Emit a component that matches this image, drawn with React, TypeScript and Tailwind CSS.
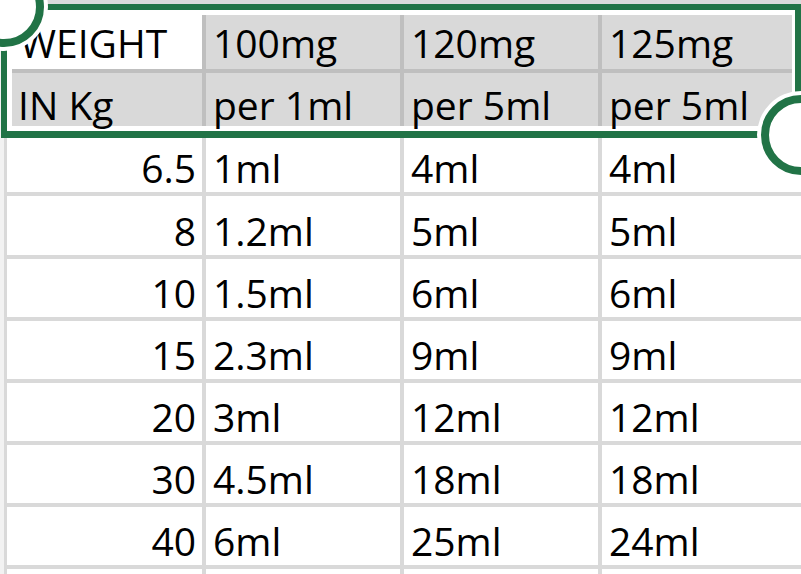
import React from "react";

const body: [string, string, string, string][] = [
  ["6.5", "1ml", "4ml", "4ml"],
  ["8", "1.2ml", "5ml", "5ml"],
  ["10", "1.5ml", "6ml", "6ml"],
  ["15", "2.3ml", "9ml", "9ml"],
  ["20", "3ml", "12ml", "12ml"],
  ["30", "4.5ml", "18ml", "18ml"],
  ["40", "6ml", "25ml", "24ml"],
  ["", "", "", ""],
];

function Handle({ cx, cy }: { cx: number; cy: number }) {
  return (
    <g>
      <circle cx={cx} cy={cy} r={44} fill="#ffffff" />
      <circle cx={cx} cy={cy} r={36} fill="#ffffff" stroke="#217346" strokeWidth={8} />
    </g>
  );
}

export default function App() {
  return (
    <div className="relative w-[801px] h-[574px] overflow-hidden bg-white font-['Open_Sans',sans-serif] text-[39px] leading-none text-black">
      {/* top strip */}
      <div className="h-[4px] bg-[#dadada]" />
      {/* header selection */}
      <div className="flex">
        <div className="w-[1px] bg-[#f2f2f2]" />
        <div className="w-[800px] border-[#217346] border-t-[6px] border-l-[6px] border-r-[6px] border-b-[7px] pt-[5px] pl-[5px] pr-[3px] pb-[5px] bg-white">
          <div className="grid grid-cols-[190px_194px_194px_190px] grid-rows-[54px_53px] gap-[4px] bg-[#bfbfbf]">
            <div className="bg-white flex items-end pl-[8px] pb-[7px]">WEIGHT</div>
            <div className="bg-[#d9d9d9] flex items-end pl-[7px] pb-[7px]">100mg</div>
            <div className="bg-[#d9d9d9] flex items-end pl-[7px] pb-[7px]">120mg</div>
            <div className="bg-[#d9d9d9] flex items-end pl-[7px] pb-[7px]">125mg</div>
            <div className="bg-[#d9d9d9] flex items-end pl-[6px] pb-[2px]">IN Kg</div>
            <div className="bg-[#d9d9d9] flex items-end pl-[7px] pb-[2px]">per 1ml</div>
            <div className="bg-[#d9d9d9] flex items-end pl-[7px] pb-[2px]">per 5ml</div>
            <div className="bg-[#d9d9d9] flex items-end pl-[7px] pb-[2px]">per 5ml</div>
          </div>
        </div>
      </div>
      {/* body */}
      <div className="flex h-[436px]">
        <div className="w-[4px] bg-[#f2f2f2]" />
        <div className="w-[3px] bg-[#d9d9d9]" />
        <div className="grid grid-cols-[195px_194px_194px_199px] grid-rows-[54px_59px_58px_58px_58px_58px_58px_58px] gap-[4px] bg-[#d9d9d9] w-[794px]">
          {body.map((r, i) => (
            <React.Fragment key={i}>
              <div className="bg-white flex items-end justify-end pr-[6px] pb-[5px]">{r[0]}</div>
              <div className="bg-white flex items-end pl-[7px] pb-[5px]">{r[1]}</div>
              <div className="bg-white flex items-end pl-[7px] pb-[5px]">{r[2]}</div>
              <div className="bg-white flex items-end pl-[7px] pb-[5px]">{r[3]}</div>
            </React.Fragment>
          ))}
        </div>
      </div>
      <svg className="absolute left-0 top-0 pointer-events-none" width={801} height={574}>
        <Handle cx={4} cy={7} />
        <Handle cx={801} cy={135} />
      </svg>
    </div>
  );
}
